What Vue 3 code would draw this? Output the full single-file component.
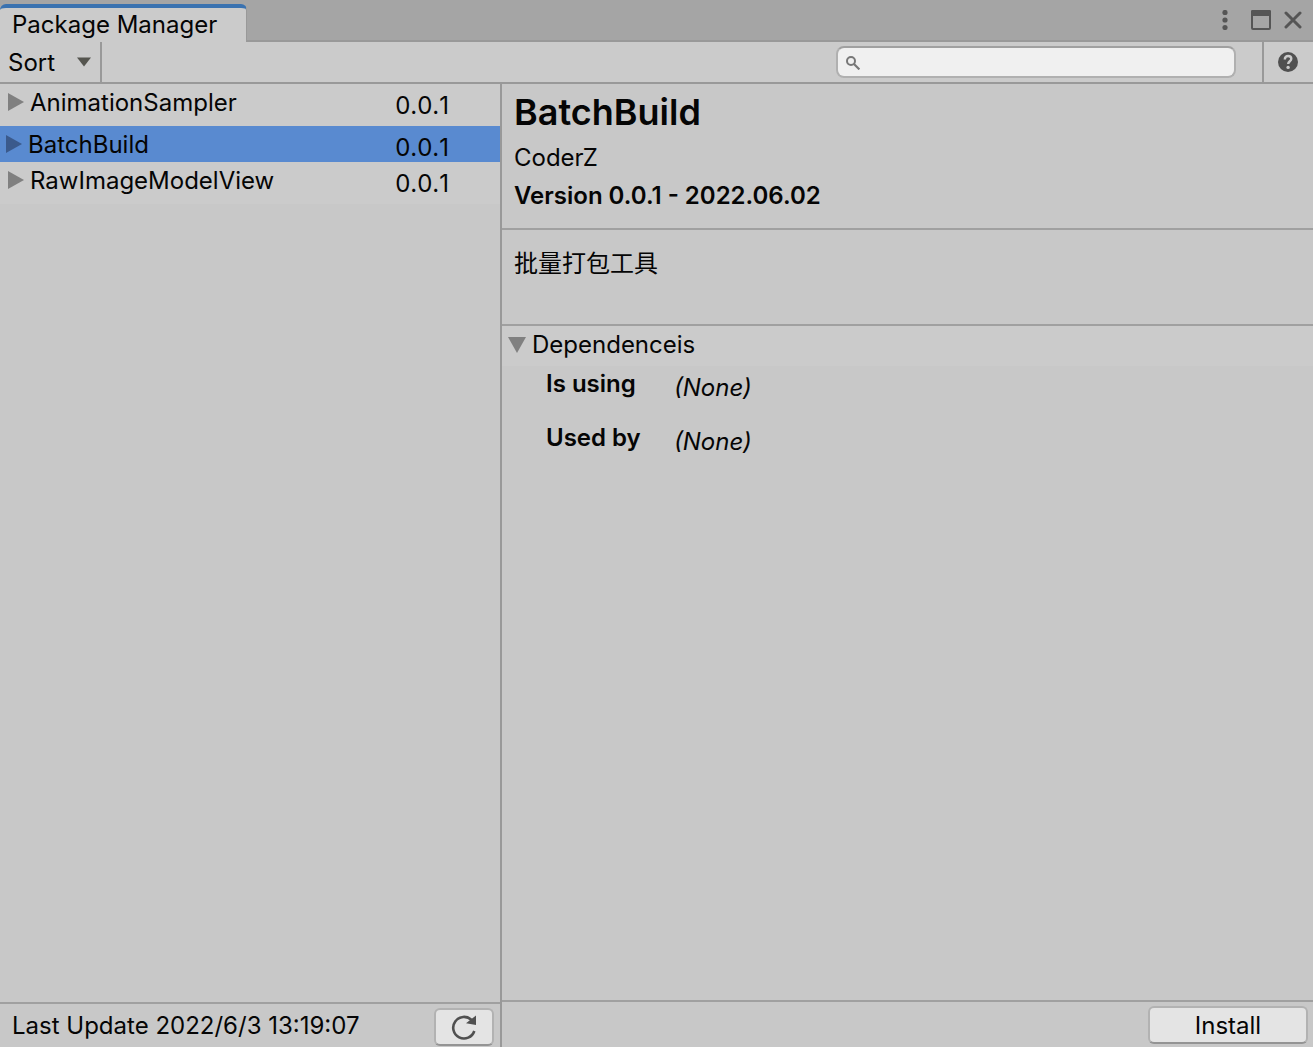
<template>
  <div class="window">
    <header class="tab-bar">
      <h1 class="tab">Package Manager</h1>
      <div class="window-controls">
        <button type="button" class="icon-button" aria-label="Menu">
          <svg width="6" height="20" viewBox="0 0 6 20" fill="#555">
            <circle cx="3" cy="2.5" r="2.6" />
            <circle cx="3" cy="10" r="2.6" />
            <circle cx="3" cy="17.5" r="2.6" />
          </svg>
        </button>
        <button type="button" class="icon-button maximize" aria-label="Maximize">
          <svg width="20" height="20" viewBox="0 0 20 20">
            <rect x="1" y="1" width="18" height="18" rx="1" fill="none" stroke="#555" stroke-width="2" />
            <path d="M1 0h18l1 1v5H0V1z" fill="#555" />
          </svg>
        </button>
        <button type="button" class="icon-button" aria-label="Close">
          <svg width="18" height="18" viewBox="0 0 18 18">
            <path d="M2 2l14 14M16 2L2 16" stroke="#555" stroke-width="3" stroke-linecap="round" />
          </svg>
        </button>
      </div>
    </header>

    <div class="toolbar">
      <div class="sort">
        <select v-model="sortBy" aria-label="Sort packages">
          <option value="">Sort</option>
          <option value="name">Name</option>
          <option value="date">Date</option>
        </select>
        <svg class="sort-arrow" width="16" height="10" viewBox="0 0 16 10">
          <path d="M1 .5h14L8 9.5z" fill="#55554f" />
        </svg>
      </div>
      <div class="search">
        <svg class="search-icon" width="14" height="14" viewBox="0 0 14 14" fill="none" stroke="#777">
          <circle cx="5" cy="5" r="4" stroke-width="2" />
          <path d="M8 8l5.4 5.4" stroke-width="2.2" />
        </svg>
        <input v-model="keyword" type="text" aria-label="Search packages" />
      </div>
      <button type="button" class="help" aria-label="Help">
        <svg width="20" height="20" viewBox="0 0 20 20">
          <circle cx="10" cy="10" r="10" fill="#505050" />
          <path d="M6.8 7.4C6.8 5.2 8.2 4 10.1 4c1.9 0 3.2 1.1 3.2 2.8 0 2.5-3.1 2.5-3.1 5.2" fill="none" stroke="#cbcbcb" stroke-width="2.4" />
          <circle cx="10.1" cy="15.4" r="1.7" fill="#cbcbcb" />
        </svg>
      </button>
    </div>

    <main class="content">
      <section class="sidebar">
        <ul class="package-list">
          <li v-for="item in filteredPackages" :key="item.name">
            <button
              type="button"
              class="package"
              :class="{ selected: item.name === selectedName }"
              @click="selectedName = item.name"
            >
              <svg class="fold-arrow" width="16" height="18" viewBox="0 0 16 18">
                <path d="M0 0l16 9-16 9z" />
              </svg>
              <span class="package-name">{{ item.name }}</span>
              <span class="package-version">{{ item.version }}</span>
            </button>
          </li>
        </ul>
        <footer class="sidebar-footer">
          <span>Last Update 2022/6/3 13:19:07</span>
          <button type="button" class="refresh" aria-label="Refresh">
            <svg width="26" height="26" viewBox="0 0 26 26">
              <path d="M20.6 6A10.8 10.8 0 1 0 23.3 17" fill="none" stroke="#505050" stroke-width="2.6" />
              <path d="M25 1.5V11l-10-1.8z" fill="#505050" />
            </svg>
          </button>
        </footer>
      </section>

      <section class="detail">
        <div class="summary">
          <h2>{{ selected.name }}</h2>
          <p class="author">{{ selected.author }}</p>
          <p class="version">Version {{ selected.version }} - {{ selected.date }}</p>
        </div>
        <p class="description">{{ selected.description }}</p>
        <div class="dependencies">
          <button type="button" class="foldout" @click="showDependencies = !showDependencies">
            <svg :class="{ closed: !showDependencies }" width="18" height="16" viewBox="0 0 18 16">
              <path d="M0 0h18L9 16z" fill="#808080" />
            </svg>
            <span>Dependenceis</span>
          </button>
          <dl v-if="showDependencies">
            <dt>Is using</dt>
            <dd>(None)</dd>
            <dt>Used by</dt>
            <dd>(None)</dd>
          </dl>
        </div>
        <footer class="detail-footer">
          <button type="button" class="install">Install</button>
        </footer>
      </section>
    </main>
  </div>
</template>

<script setup>
import { ref, computed } from 'vue';

const packages = [
  { name: 'AnimationSampler', version: '0.0.1', author: 'CoderZ', date: '2022.06.02', description: '' },
  { name: 'BatchBuild', version: '0.0.1', author: 'CoderZ', date: '2022.06.02', description: '批量打包工具' },
  { name: 'RawImageModelView', version: '0.0.1', author: 'CoderZ', date: '2022.06.02', description: '' }
];

const sortBy = ref('');
const keyword = ref('');
const selectedName = ref('BatchBuild');
const showDependencies = ref(true);

const selected = computed(() => packages.find((item) => item.name === selectedName.value));

const filteredPackages = computed(() => {
  const key = keyword.value.trim().toLowerCase();
  const list = packages.filter((item) => item.name.toLowerCase().includes(key));
  if (sortBy.value === 'name') {
    list.sort((a, b) => a.name.localeCompare(b.name));
  }
  if (sortBy.value === 'date') {
    list.sort((a, b) => a.date.localeCompare(b.date));
  }
  return list;
});
</script>

<style>
body {
  margin: 0;
  background-color: #c8c8c8;
}
</style>

<style scoped>
.window {
  display: flex;
  flex-direction: column;
  min-height: 100vh;
  background-color: #c8c8c8;
  color: #050505;
  font-family: Inter, "Noto Sans CJK SC", sans-serif;
  font-size: 24px;
  line-height: 32px;
}

.window *,
.window {
  box-sizing: border-box;
}

h1,
h2,
p,
ul,
dl,
dd {
  margin: 0;
  padding: 0;
}

button,
select,
input {
  margin: 0;
  padding: 0;
  border: none;
  background: none;
  color: inherit;
  font: inherit;
}

svg {
  display: block;
  flex-shrink: 0;
}

/* Tab bar */
.tab-bar {
  display: flex;
  justify-content: space-between;
  height: 42px;
  padding-top: 4px;
  background-color: #a5a5a5;
  box-shadow: inset 0 -2px #999;
}

.tab {
  padding: 1px 29px 0 12px;
  border-top: 4px solid #3a72b0;
  border-right: 1px solid #999;
  border-radius: 6px 6px 0 0;
  background-color: #cbcbcb;
  font-size: 24px;
  font-weight: 400;
}

.window-controls {
  display: flex;
  align-items: center;
  gap: 12px;
  padding: 0 11px 6px 0;
}

.maximize {
  margin: 0 1px 0 11px;
}

/* Toolbar */
.toolbar {
  display: flex;
  align-items: center;
  height: 42px;
  border-bottom: 2px solid #999;
  background-color: #cbcbcb;
}

.sort {
  position: relative;
  height: 100%;
  border-right: 2px solid #999;
}

.sort select {
  width: 100px;
  height: 100%;
  padding: 2px 0 0 8px;
  appearance: none;
}

.sort-arrow {
  position: absolute;
  top: 15px;
  right: 8px;
  pointer-events: none;
}

.search {
  display: flex;
  align-items: center;
  gap: 8px;
  width: 400px;
  height: 32px;
  margin-left: auto;
  padding: 1px 8px 0;
  border: 2px solid #b0b0b0;
  border-top-color: #a0a0a0;
  border-radius: 8px;
  background-color: #f0f0f0;
}

.search input {
  flex: 1;
  min-width: 0;
  outline: none;
}

.help {
  display: flex;
  align-items: center;
  justify-content: center;
  width: 51px;
  height: 100%;
  margin-left: 26px;
  padding-right: 1px;
  border-left: 2px solid #999;
}

/* Package list */
.content {
  display: flex;
  flex: 1;
}

.sidebar {
  display: flex;
  flex-direction: column;
  width: 502px;
  border-right: 2px solid #999;
}

.package-list {
  flex: 1;
  list-style: none;
}

.package {
  display: flex;
  align-items: flex-start;
  width: 100%;
  height: 42px;
  padding: 3px 51px 0 8px;
  background-color: #cbcbcb;
  text-align: left;
}

.package.selected {
  height: 36px;
  padding-left: 6px;
  background-color: #598ad0;
}

.fold-arrow {
  margin: 6px 6px 0 0;
  fill: #808080;
}

.selected .fold-arrow {
  fill: #3b5a8c;
}

.package-name {
  flex: 1;
}

.package-version {
  padding-top: 3px;
  font-kerning: none;
}

.sidebar-footer {
  display: flex;
  justify-content: space-between;
  height: 45px;
  padding: 4px 6px 0 12px;
  border-top: 2px solid #a0a0a0;
}

.sidebar-footer span {
  padding-top: 2px;
}

.refresh,
.install {
  display: flex;
  align-items: center;
  justify-content: center;
  height: 38px;
  border: 2px solid #b2b2b2;
  border-bottom-color: #949494;
  border-radius: 6px;
  background-color: #e4e4e4;
}

.refresh {
  width: 60px;
}

/* Package detail */
.detail {
  display: flex;
  flex: 1;
  flex-direction: column;
}

.summary {
  padding: 4px 12px 16px;
  border-bottom: 2px solid #a0a0a0;
}

h2 {
  font-size: 36px;
  font-weight: 600;
  line-height: 48px;
}

.author {
  padding: 6px 0;
}

.version {
  font-weight: 600;
}

.description {
  min-height: 96px;
  padding: 18px 12px;
  border-bottom: 2px solid #a0a0a0;
}

.dependencies {
  flex: 1;
}

.foldout {
  display: flex;
  align-items: center;
  gap: 6px;
  width: 100%;
  height: 40px;
  padding: 0 6px 2px;
  background-color: #cbcbcb;
}

.foldout .closed {
  transform: rotate(-90deg);
}

dl {
  display: grid;
  grid-template-columns: 128px 1fr;
  row-gap: 18px;
  padding: 2px 44px;
}

dt {
  font-weight: 600;
}

dd {
  padding-top: 4px;
  font-style: italic;
}

.detail-footer {
  display: flex;
  justify-content: flex-end;
  height: 47px;
  padding: 4px 5px 0;
  border-top: 2px solid #a0a0a0;
}

.install {
  width: 160px;
  padding-top: 2px;
}
</style>
